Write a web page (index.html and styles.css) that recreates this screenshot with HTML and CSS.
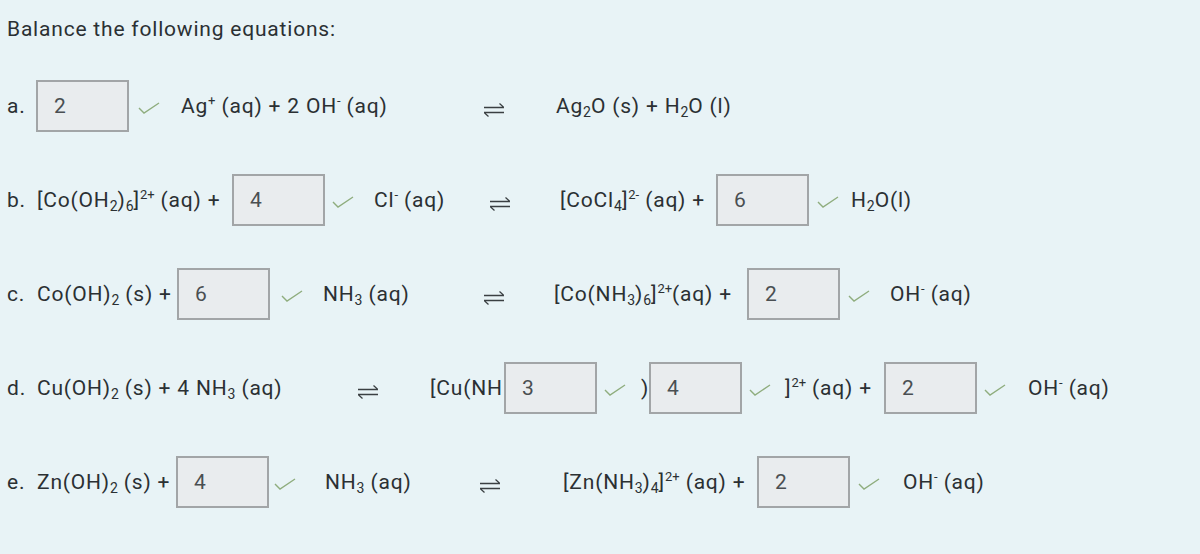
FILE: index.html
```html
<!DOCTYPE html>
<html>
<head>
<meta charset="utf-8">
<link rel="stylesheet" href="styles.css">
</head>
<body>
<div class="page">
  <div class="title">Balance the following equations:</div>

  <!-- a -->
  <div class="row row-a">
    <span class="lbl la">a.</span>
    <span class="box">2</span>
    <span class="chk ca1"><svg viewBox="0 0 22 12" width="22" height="12"><polyline points="1,6 6,11 21,1"/></svg></span>
    <span class="txt ta1">Ag<sup>+</sup> (aq) + 2 OH<sup>-</sup> (aq)</span>
    <span class="arr"><svg viewBox="0 0 20 14" width="20" height="14"><path d="M0 4.5H20L15.5 0.5M20 9.5H0L4.5 13.5"/></svg></span>
    <span class="txt ta2">Ag<sub>2</sub>O (s) + H<sub>2</sub>O (l)</span>
  </div>

  <!-- b -->
  <div class="row row-b">
    <span class="lbl">b.</span>
    <span class="txt tb1">[Co(OH<sub>2</sub>)<sub>6</sub>]<sup>2+</sup> (aq) +</span>
    <span class="box">4</span>
    <span class="chk cb1"><svg viewBox="0 0 22 12" width="22" height="12"><polyline points="1,6 6,11 21,1"/></svg></span>
    <span class="txt tb2">Cl<sup>-</sup> (aq)</span>
    <span class="arr"><svg viewBox="0 0 20 14" width="20" height="14"><path d="M0 4.5H20L15.5 0.5M20 9.5H0L4.5 13.5"/></svg></span>
    <span class="txt tb3">[CoCl<sub>4</sub>]<sup>2-</sup> (aq) +</span>
    <span class="box">6</span>
    <span class="chk cb2"><svg viewBox="0 0 22 12" width="22" height="12"><polyline points="1,6 6,11 21,1"/></svg></span>
    <span class="txt">H<sub>2</sub>O(l)</span>
  </div>

  <!-- c -->
  <div class="row row-c">
    <span class="lbl">c.</span>
    <span class="txt tc1">Co(OH)<sub>2</sub> (s) +</span>
    <span class="box">6</span>
    <span class="chk cc1"><svg viewBox="0 0 22 12" width="22" height="12"><polyline points="1,6 6,11 21,1"/></svg></span>
    <span class="txt tc2">NH<sub>3</sub> (aq)</span>
    <span class="arr"><svg viewBox="0 0 20 14" width="20" height="14"><path d="M0 4.5H20L15.5 0.5M20 9.5H0L4.5 13.5"/></svg></span>
    <span class="txt tc3">[Co(NH<sub>3</sub>)<sub>6</sub>]<sup>2+</sup>(aq) +</span>
    <span class="box">2</span>
    <span class="chk cc2"><svg viewBox="0 0 22 12" width="22" height="12"><polyline points="1,6 6,11 21,1"/></svg></span>
    <span class="txt">OH<sup>-</sup> (aq)</span>
  </div>

  <!-- d -->
  <div class="row row-d">
    <span class="lbl">d.</span>
    <span class="txt td1">Cu(OH)<sub>2</sub> (s) + 4 NH<sub>3</sub> (aq)</span>
    <span class="arr"><svg viewBox="0 0 20 14" width="20" height="14"><path d="M0 4.5H20L15.5 0.5M20 9.5H0L4.5 13.5"/></svg></span>
    <span class="txt td2">[Cu(NH</span>
    <span class="box">3</span>
    <span class="chk cd1"><svg viewBox="0 0 22 12" width="22" height="12"><polyline points="1,6 6,11 21,1"/></svg></span>
    <span class="txt td3">)</span>
    <span class="box">4</span>
    <span class="chk cd2"><svg viewBox="0 0 22 12" width="22" height="12"><polyline points="1,6 6,11 21,1"/></svg></span>
    <span class="txt td4">]<sup>2+</sup> (aq) +</span>
    <span class="box">2</span>
    <span class="chk cd3"><svg viewBox="0 0 22 12" width="22" height="12"><polyline points="1,6 6,11 21,1"/></svg></span>
    <span class="txt">OH<sup>-</sup> (aq)</span>
  </div>

  <!-- e -->
  <div class="row row-e">
    <span class="lbl">e.</span>
    <span class="txt te1">Zn(OH)<sub>2</sub> (s) +</span>
    <span class="box">4</span>
    <span class="chk ce1"><svg viewBox="0 0 22 12" width="22" height="12"><polyline points="1,6 6,11 21,1"/></svg></span>
    <span class="txt te2">NH<sub>3</sub> (aq)</span>
    <span class="arr"><svg viewBox="0 0 20 14" width="20" height="14"><path d="M0 4.5H20L15.5 0.5M20 9.5H0L4.5 13.5"/></svg></span>
    <span class="txt te3">[Zn(NH<sub>3</sub>)<sub>4</sub>]<sup>2+</sup> (aq) +</span>
    <span class="box">2</span>
    <span class="chk ce2"><svg viewBox="0 0 22 12" width="22" height="12"><polyline points="1,6 6,11 21,1"/></svg></span>
    <span class="txt">OH<sup>-</sup> (aq)</span>
  </div>
</div>
</body>
</html>
```
FILE: styles.css
```css
html, body {
  margin: 0;
  padding: 0;
  background: #e8f3f6;
}
body {
  font-family: Roboto, "Liberation Sans", sans-serif;
  color: #2b3033;
  font-size: 21px;
  letter-spacing: 0.8px;
  width: 1200px;
  height: 554px;
  overflow: hidden;
}
.page {
  padding: 16px 0 0 7px;
}
.title {
  font-size: 21px;
  line-height: 26px;
  height: 26px;
  margin-bottom: 38px;
}
.row {
  display: flex;
  align-items: center;
  height: 52px;
  margin-bottom: 42px;
  white-space: nowrap;
}
.row-d { margin-top: 3px; }
.row > span { flex: none; }
.lbl { width: 30px; }
.la { width: 29px; }
.txt { line-height: 24px; }
sub {
  font-size: 14px;
  letter-spacing: 0;
  vertical-align: -4px;
  line-height: 0;
}
sup {
  font-size: 13px;
  letter-spacing: 0;
  vertical-align: 8px;
  line-height: 0;
}
.box {
  box-sizing: border-box;
  width: 93px;
  height: 52px;
  border: 2px solid #a2a5a7;
  background: #e9ecee;
  color: #4a4f52;
  padding-left: 16px;
  display: flex;
  align-items: center;
}
.chk {
  display: flex;
  align-items: center;
  padding-top: 4px;
}
.chk svg polyline {
  fill: none;
  stroke: #8fad7e;
  stroke-width: 1.4;
}
.arr {
  display: flex;
  align-items: center;
  width: 20px;
  padding-top: 8px;
}
.arr svg path {
  fill: none;
  stroke: #3a3f42;
  stroke-width: 1.3;
}

/* row a */
.ca1 { width: 43px; padding-left: 9px; }
.ta1 { width: 303px; }
.ta2 { margin-left: 52px; }

/* row b */
.tb1 { width: 195px; }
.cb1 { width: 42px; padding-left: 7px; }
.tb2 { width: 116px; }
.tb3 { margin-left: 50px; width: 156px; }
.cb2 { width: 34px; padding-left: 8px; }

/* row c */
.tc1 { width: 140px; }
.cc1 { width: 42px; padding-left: 11px; }
.tc2 { width: 161px; }
.tc3 { margin-left: 50px; width: 193px; }
.cc2 { width: 42px; padding-left: 8px; }

/* row d */
.td1 { width: 321px; }
.td2 { margin-left: 52px; width: 74px; }
.cd1 { width: 37px; padding-left: 7px; }
.td3 { width: 8px; }
.cd2 { width: 36px; padding-left: 7px; }
.td4 { width: 99px; }
.cd3 { width: 44px; padding-left: 7px; }

/* row e */
.te1 { width: 139px; }
.ce1 { width: 51px; padding-left: 5px; }
.te2 { width: 155px; }
.te3 { margin-left: 63px; width: 194px; }
.ce2 { width: 45px; padding-left: 8px; }
```
